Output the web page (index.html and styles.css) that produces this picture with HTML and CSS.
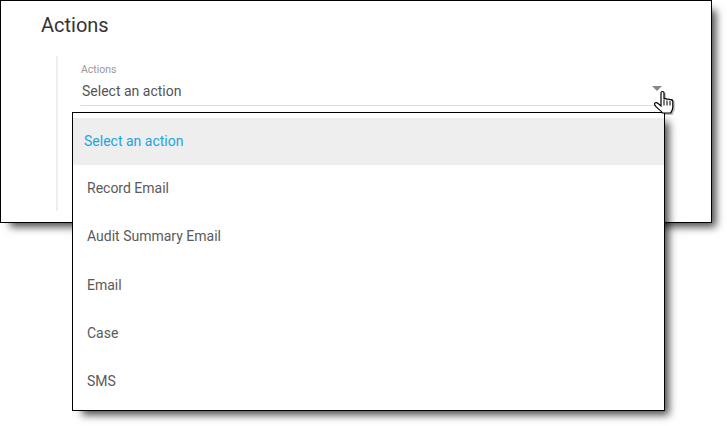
FILE: index.html
```html
<!DOCTYPE html>
<html lang="en">
<head>
  <meta charset="UTF-8">
  <title>Actions</title>
  <link rel="stylesheet" href="styles.css">
</head>
<body>
  <div class="card">
    <h2 class="card-title">Actions</h2>
    <div class="section">
      <div class="field">
        <div class="field-label">Actions</div>
        <div class="field-value">
          <span>Select an action</span>
          <span class="arrow"></span>
        </div>
      </div>
    </div>
  </div>

  <ul class="menu">
    <li class="menu-item selected">Select an action</li>
    <li class="menu-item">Record Email</li>
    <li class="menu-item">Audit Summary Email</li>
    <li class="menu-item">Email</li>
    <li class="menu-item">Case</li>
    <li class="menu-item">SMS</li>
  </ul>

  <svg class="cursor" width="22" height="27" viewBox="0 0 22 27">
    <path class="cursor-shadow" d="M9 4c0-2 3-2 3 0v6.500c0-1.200 3-1.200 3 0.300 0-1 3-1 3 0.400 0-0.800 2.800-0.800 2.800 0.800V18.500c0 2.500-1.300 3.500-2 6.500H10.500C9.500 22 4 19.500 2.500 16c-1-2 1.500-3.200 3-1.800L9 17Z"/>
    <path class="cursor-hand" d="M7 3c0-2 3-2 3 0v6.500c0-1.200 3-1.200 3 0.300 0-1 3-1 3 0.400 0-0.800 2.800-0.800 2.800 0.800V17.500c0 2.500-1.300 3.500-2 5.500H8.500C7.500 20.500 2 18 0.800 15c-1-2 1.500-3.200 3-1.800L7 16Z"/>
    <path class="cursor-line" d="M10 10v5.500M13 10.500v5M16 11v4.500"/>
  </svg>
</body>
</html>
```

FILE: styles.css
```css
* {
  box-sizing: border-box;
}
body {
  margin: 0;
  width: 727px;
  height: 426px;
  overflow: hidden;
  background-color: #fff;
  font-family: Roboto, "Liberation Sans", sans-serif;
}
.card {
  width: 712px;
  height: 223px;
  padding: 13px 0 0 40px;
  background-color: #fff;
  border: 1px solid #000;
  box-shadow: 7px 7px 8px -3px rgba(0, 0, 0, 0.7);
}
.card-title {
  margin: 0;
  font-size: 20px;
  line-height: 22px;
  font-weight: 400;
  color: #333;
}
.section {
  margin: 20px 0 0 15px;
  width: 609px;
  height: 155px;
  padding: 7px 0 0 22px;
  border-left: 2px solid #eee;
}
.field {
  border-bottom: 1px solid #ddd;
  height: 43px;
}
.field-label {
  padding-left: 1px;
  font-size: 10.5px;
  line-height: 14px;
  color: #999;
}
.field-value {
  display: flex;
  justify-content: space-between;
  align-items: center;
  padding: 0 3px 0 2px;
  font-size: 14px;
  line-height: 20px;
  margin-top: 4px;
  color: #555;
}
.arrow {
  width: 0;
  height: 0;
  margin-top: -6px;
  border-left: 5px solid transparent;
  border-right: 5px solid transparent;
  border-top: 5px solid #888;
}
.menu {
  position: absolute;
  left: 72px;
  top: 112px;
  width: 593px;
  height: 299px;
  margin: 0;
  padding: 5px 0 0;
  list-style: none;
  background-color: #fff;
  border: 1px solid #000;
  box-shadow: 7px 7px 8px -3px rgba(0, 0, 0, 0.7);
}
.menu-item {
  height: 48.3px;
  padding-left: 14px;
  font-size: 14px;
  line-height: 46px;
  color: #5a5a5a;
}
.menu-item.selected {
  height: 47px;
  padding-left: 11px;
  line-height: 47px;
  background-color: #eee;
  color: #1ba5e0;
}
.cursor {
  position: absolute;
  left: 654px;
  top: 90px;
}
.cursor-shadow {
  fill: rgba(0, 0, 0, 0.25);
}
.cursor-hand {
  fill: #fff;
  stroke: #000;
  stroke-width: 1.2;
}
.cursor-line {
  fill: none;
  stroke: #000;
  stroke-width: 1;
}
```
